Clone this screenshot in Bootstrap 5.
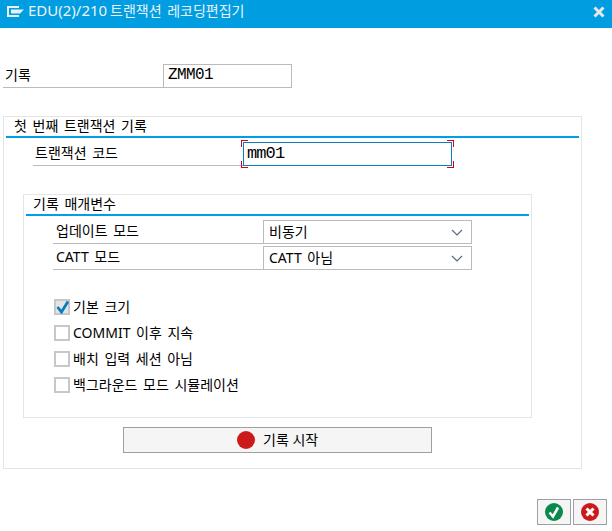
<!DOCTYPE html>
<html lang="ko">
<head>
<meta charset="utf-8">
<title>트랜잭션 레코딩편집기</title>
<link href="https://cdn.jsdelivr.net/npm/bootstrap@5.3.0/dist/css/bootstrap.min.css" rel="stylesheet">
<style>
html,body{width:612px;height:531px;overflow:hidden;margin:0;background:#fff}
body{font-family:"Noto Sans","Noto Sans CJK KR",sans-serif;font-size:14px;line-height:20px;color:#000;word-spacing:2px}
.title-bar{height:28px;background:#009de0;color:#e8f4fb;padding:0 5px 0 7px;font-size:15px}
.title-icon{margin-top:-5px;flex:none}
.title-text{margin-left:3px;margin-top:-7px;word-spacing:0}
.title-ko{font-size:14px;word-spacing:2px;margin-left:-1px}
.close-x{margin-top:-4px;margin-right:2px}
.page-body{padding:36px 0 0 3px}
.f-label{height:24px;border-bottom:1px solid #bbb;padding:1px 0 0 2px}
.f-first{width:160px}
.mono-input{font-family:"Liberation Mono",monospace;font-size:16px;height:24px;border:1px solid #bbb;background:#fff;padding:0 0 2px 4px;line-height:20px;border-radius:0;outline:0;color:#000;letter-spacing:-.6px}
.rec-input{width:129px}
.group-a{width:579px;height:353px;margin-top:28px;border:1px solid #e5e5e5;padding:0 2px}
.g-title{height:21px;padding-left:8px;line-height:17px;border-bottom:2px solid #009fe3}
.tcode-row{margin:4px 0 0 27px}
.tcode-label{width:210px;padding-left:2px}
.wrap-corner{position:relative;width:209px}
.tcode-input{width:209px;border:1px solid #0a7cc0;font-size:17px;letter-spacing:-.9px;padding-left:3px}
.corner{position:absolute;width:7px;height:7px;border:0 solid #d0021b}
.c-tl{left:-2px;top:-2px;border-width:1px 0 0 1px}
.c-bl{left:-2px;bottom:-2px;border-width:0 0 1px 1px}
.c-tr{right:-2px;top:-2px;border-width:1px 1px 0 0}
.c-br{right:-2px;bottom:-2px;border-width:0 1px 1px 0}
.group-b{width:509px;height:224px;margin:28px 0 0 17px;border:1px solid #e5e5e5;padding:0 2px}
.g-title-b{padding-left:7px}
.param-list{margin:4px 0 0 27px}
.param-row{height:23px;margin-bottom:3px}
.param-label{width:210px;height:24px;border-bottom:1px solid #bbb;padding:1px 0 0 3px}
.sel-box{width:209px;height:24px;border:1px solid #bbb;padding:0 8px 0 5px}
.check-list{margin:30px 0 0 28px;gap:10px}
.chk-row{height:16px;line-height:16px;gap:3px}
.chk-box{width:16px;height:16px;border:2px solid #c8c8c8;position:relative;flex:none}
.chk-box.on{background:#e4e4e4}
.chk-box svg{position:absolute;left:0;top:-1px}
.rec-btn{display:flex;width:309px;height:26px;margin:9px 0 0 117px;border:1px solid #a0a0a0;background:#f5f5f5;border-radius:0;padding:0 0 0 113px;color:#000;font-size:14px;line-height:20px;gap:8px;align-items:center}
.rec-dot{width:18px;height:18px;border-radius:50%;background:#cc1a1a;flex:none}
.foot-bar{margin:30px 5px 0 0;gap:2px}
.foot-btn{width:34px;height:26px;border:1px solid #a0a0a0;background:#f5f5f5;padding:0;border-radius:0}
</style>
</head>
<body>
<header class="title-bar d-flex align-items-center">
  <svg class="title-icon" width="18" height="11" viewBox="0 0 18 11" aria-hidden="true">
    <path d="M0 0H12V2H2V9H12V11H0Z" fill="#e8f0f5"/>
    <path d="M4 3.500H17L13 7.500H4Z" fill="#e8f0f5"/>
  </svg>
  <span class="title-text">EDU(2)/210 <span class="title-ko">트랜잭션 레코딩편집기</span></span>
  <svg class="close-x ms-auto" width="12" height="12" viewBox="0 0 12 12" aria-hidden="true"><path d="M1.500 1.500L10.500 10.500M10.500 1.500L1.500 10.500" stroke="#e8e8e8" stroke-width="3"/></svg>
</header>
<main class="page-body">
  <div class="d-flex">
    <div class="f-label f-first">기록</div>
    <input class="mono-input rec-input" value="ZMM01" aria-label="기록">
  </div>
  <section class="group-a">
    <div class="g-title">첫 번째 트랜잭션 기록</div>
    <div class="tcode-row d-flex">
      <div class="f-label tcode-label">트랜잭션 코드</div>
      <div class="wrap-corner">
        <input class="mono-input tcode-input" value="mm01" aria-label="트랜잭션 코드">
        <span class="corner c-tl"></span><span class="corner c-bl"></span><span class="corner c-tr"></span><span class="corner c-br"></span>
      </div>
    </div>
    <section class="group-b">
      <div class="g-title g-title-b">기록 매개변수</div>
      <div class="param-list">
        <div class="param-row d-flex">
          <div class="param-label">업데이트 모드</div>
          <div class="sel-box d-flex align-items-center justify-content-between"><span>비동기</span>
            <svg width="12" height="7" viewBox="0 0 12 7" aria-hidden="true"><path d="M1 1L6 6L11 1" fill="none" stroke="#5a6a78" stroke-width="1.200"/></svg></div>
        </div>
        <div class="param-row d-flex">
          <div class="param-label">CATT 모드</div>
          <div class="sel-box d-flex align-items-center justify-content-between"><span>CATT 아님</span>
            <svg width="12" height="7" viewBox="0 0 12 7" aria-hidden="true"><path d="M1 1L6 6L11 1" fill="none" stroke="#5a6a78" stroke-width="1.200"/></svg></div>
        </div>
      </div>
      <div class="check-list d-flex flex-column">
        <div class="chk-row d-flex"><span class="chk-box on"><svg width="14" height="14" viewBox="0 0 14 14" aria-hidden="true"><path d="M1.500 7L5.500 12L12 1.500" fill="none" stroke="#0a7cc0" stroke-width="2.800"/></svg></span><span>기본 크기</span></div>
        <div class="chk-row d-flex"><span class="chk-box"></span><span>COMMIT 이후 지속</span></div>
        <div class="chk-row d-flex"><span class="chk-box"></span><span>배치 입력 세션 아님</span></div>
        <div class="chk-row d-flex"><span class="chk-box"></span><span>백그라운드 모드 시뮬레이션</span></div>
      </div>
    </section>
    <button type="button" class="rec-btn"><span class="rec-dot"></span><span>기록 시작</span></button>
  </section>
  <div class="foot-bar d-flex justify-content-end">
    <button type="button" class="foot-btn d-flex align-items-center justify-content-center" aria-label="확인">
      <svg width="18" height="18" viewBox="0 0 18 18" aria-hidden="true"><circle cx="9" cy="9" r="9" fill="#0a8a4a"/><path d="M4.500 9.500L8 13.500L13 4.500" fill="none" stroke="#fff" stroke-width="2.600"/></svg>
    </button>
    <button type="button" class="foot-btn d-flex align-items-center justify-content-center" aria-label="취소">
      <svg width="18" height="18" viewBox="0 0 18 18" aria-hidden="true"><circle cx="9" cy="9" r="9" fill="#cc1a1a"/><path d="M5.500 5.500L12.500 12.500M12.500 5.500L5.500 12.500" stroke="#fff" stroke-width="3"/></svg>
    </button>
  </div>
</main>
<script src="https://cdn.jsdelivr.net/npm/bootstrap@5.3.0/dist/js/bootstrap.bundle.min.js"></script>
</body>
</html>
